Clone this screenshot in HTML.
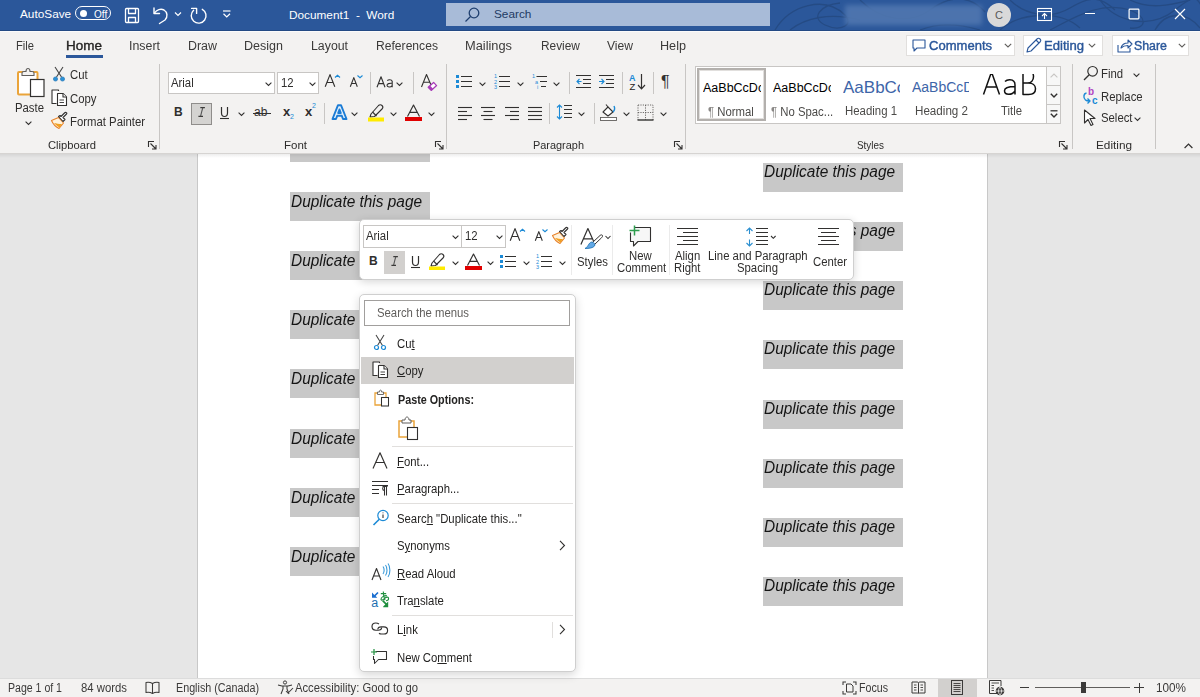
<!DOCTYPE html>
<html><head><meta charset="utf-8"><title>Word</title>
<style>
html,body{margin:0;padding:0;}
body{width:1200px;height:697px;overflow:hidden;position:relative;background:#e6e6e6;font-family:"Liberation Sans", sans-serif;}
.t{position:absolute;white-space:nowrap;}
.r{position:absolute;}
.s{position:absolute;overflow:visible;}
</style></head><body>
<div class="r" style="left:0px;top:0px;width:1200px;height:31px;background:#2b579a;"></div>
<div class="r" style="left:0px;top:30px;width:1200px;height:1px;background:#234a84;"></div>
<div class="r" style="left:0px;top:31px;width:1200px;height:1px;background:#fbfbfb;"></div>
<div class="r" style="left:0px;top:32px;width:1200px;height:121px;background:#f3f2f1;"></div>
<div class="r" style="left:0px;top:153px;width:1200px;height:1px;background:#d6d4d2;"></div>
<div class="r" style="left:0px;top:154px;width:1200px;height:524px;background:#e6e6e6;"></div>
<div class="r" style="left:197px;top:154px;width:1px;height:524px;background:#c8c8c8;"></div>
<div class="r" style="left:198px;top:154px;width:789px;height:524px;background:#ffffff;"></div>
<div class="r" style="left:987px;top:154px;width:1px;height:524px;background:#c8c8c8;"></div>
<div class="r" style="left:0px;top:679px;width:1200px;height:18px;background:#f3f2f1;"></div>
<div class="r" style="left:0px;top:678px;width:1200px;height:1px;background:#dcdcdc;"></div>
<div class="r" style="left:290px;top:133px;width:140px;height:29px;background:#c8c8c8;"></div>
<div class="t" style="left:291px;top:133.10px;font-size:16px;line-height:20.8px;color:#151515;font-weight:normal;font-style:italic;transform:scaleX(0.963);transform-origin:0 0;">Duplicate this page</div>
<div class="r" style="left:290px;top:192px;width:140px;height:29px;background:#c8c8c8;"></div>
<div class="t" style="left:291px;top:192.10px;font-size:16px;line-height:20.8px;color:#151515;font-weight:normal;font-style:italic;transform:scaleX(0.963);transform-origin:0 0;">Duplicate this page</div>
<div class="r" style="left:290px;top:251px;width:140px;height:29px;background:#c8c8c8;"></div>
<div class="t" style="left:291px;top:251.10px;font-size:16px;line-height:20.8px;color:#151515;font-weight:normal;font-style:italic;transform:scaleX(0.963);transform-origin:0 0;">Duplicate this page</div>
<div class="r" style="left:290px;top:310px;width:140px;height:29px;background:#c8c8c8;"></div>
<div class="t" style="left:291px;top:310.10px;font-size:16px;line-height:20.8px;color:#151515;font-weight:normal;font-style:italic;transform:scaleX(0.963);transform-origin:0 0;">Duplicate this page</div>
<div class="r" style="left:290px;top:369px;width:140px;height:29px;background:#c8c8c8;"></div>
<div class="t" style="left:291px;top:369.10px;font-size:16px;line-height:20.8px;color:#151515;font-weight:normal;font-style:italic;transform:scaleX(0.963);transform-origin:0 0;">Duplicate this page</div>
<div class="r" style="left:290px;top:429px;width:140px;height:29px;background:#c8c8c8;"></div>
<div class="t" style="left:291px;top:429.10px;font-size:16px;line-height:20.8px;color:#151515;font-weight:normal;font-style:italic;transform:scaleX(0.963);transform-origin:0 0;">Duplicate this page</div>
<div class="r" style="left:290px;top:488px;width:140px;height:29px;background:#c8c8c8;"></div>
<div class="t" style="left:291px;top:488.10px;font-size:16px;line-height:20.8px;color:#151515;font-weight:normal;font-style:italic;transform:scaleX(0.963);transform-origin:0 0;">Duplicate this page</div>
<div class="r" style="left:290px;top:547px;width:140px;height:29px;background:#c8c8c8;"></div>
<div class="t" style="left:291px;top:547.10px;font-size:16px;line-height:20.8px;color:#151515;font-weight:normal;font-style:italic;transform:scaleX(0.963);transform-origin:0 0;">Duplicate this page</div>
<div class="r" style="left:763px;top:163px;width:140px;height:29px;background:#c8c8c8;"></div>
<div class="t" style="left:764px;top:162.10px;font-size:16px;line-height:20.8px;color:#151515;font-weight:normal;font-style:italic;transform:scaleX(0.963);transform-origin:0 0;">Duplicate this page</div>
<div class="r" style="left:763px;top:222px;width:140px;height:29px;background:#c8c8c8;"></div>
<div class="t" style="left:764px;top:221.10px;font-size:16px;line-height:20.8px;color:#151515;font-weight:normal;font-style:italic;transform:scaleX(0.963);transform-origin:0 0;">Duplicate this page</div>
<div class="r" style="left:763px;top:281px;width:140px;height:29px;background:#c8c8c8;"></div>
<div class="t" style="left:764px;top:280.10px;font-size:16px;line-height:20.8px;color:#151515;font-weight:normal;font-style:italic;transform:scaleX(0.963);transform-origin:0 0;">Duplicate this page</div>
<div class="r" style="left:763px;top:340px;width:140px;height:29px;background:#c8c8c8;"></div>
<div class="t" style="left:764px;top:339.10px;font-size:16px;line-height:20.8px;color:#151515;font-weight:normal;font-style:italic;transform:scaleX(0.963);transform-origin:0 0;">Duplicate this page</div>
<div class="r" style="left:763px;top:400px;width:140px;height:29px;background:#c8c8c8;"></div>
<div class="t" style="left:764px;top:399.10px;font-size:16px;line-height:20.8px;color:#151515;font-weight:normal;font-style:italic;transform:scaleX(0.963);transform-origin:0 0;">Duplicate this page</div>
<div class="r" style="left:763px;top:459px;width:140px;height:29px;background:#c8c8c8;"></div>
<div class="t" style="left:764px;top:458.10px;font-size:16px;line-height:20.8px;color:#151515;font-weight:normal;font-style:italic;transform:scaleX(0.963);transform-origin:0 0;">Duplicate this page</div>
<div class="r" style="left:763px;top:518px;width:140px;height:29px;background:#c8c8c8;"></div>
<div class="t" style="left:764px;top:517.10px;font-size:16px;line-height:20.8px;color:#151515;font-weight:normal;font-style:italic;transform:scaleX(0.963);transform-origin:0 0;">Duplicate this page</div>
<div class="r" style="left:763px;top:577px;width:140px;height:29px;background:#c8c8c8;"></div>
<div class="t" style="left:764px;top:576.10px;font-size:16px;line-height:20.8px;color:#151515;font-weight:normal;font-style:italic;transform:scaleX(0.963);transform-origin:0 0;">Duplicate this page</div>
<div class="r" style="left:0px;top:32px;width:1200px;height:121px;background:#f3f2f1;"></div>
<div class="r" style="left:0px;top:153px;width:1200px;height:1px;background:#d6d4d2;"></div>
<div class="r" style="left:0px;top:154px;width:1200px;height:4px;background:linear-gradient(rgba(0,0,0,0.07),rgba(0,0,0,0));"></div>
<svg class="s" style="left:770px;top:0px;overflow:hidden" width="430" height="30" viewBox="0 0 430 30" fill="none"><g stroke="#23477d" stroke-width="1.3" opacity="0.75"><path d="M5 30 C20 5 55 -5 75 15 C85 25 70 32 55 25 C40 18 50 5 70 3"/><path d="M20 30 C35 18 60 12 90 20"/><path d="M90 0 C110 20 140 25 160 10 S200 -5 215 12"/><path d="M230 30 C250 12 290 10 310 28"/><path d="M240 0 C255 15 280 20 300 8 S330 -4 345 10"/><path d="M280 30 C300 20 330 0 360 10 C380 18 375 30 360 28"/><path d="M330 0 C345 22 380 30 405 10 S425 -2 440 20"/><path d="M385 30 C395 12 415 10 430 28"/><path d="M360 0 C380 10 400 5 420 0"/><path d="M150 30 C170 22 190 24 210 30"/></g></svg>
<div class="t" style="left:20px;top:7.33px;font-size:11.8px;line-height:15.34px;color:#ffffff;font-weight:normal;font-style:normal;">AutoSave</div>
<div class="r" style="left:75px;top:6px;width:34px;height:12px;border:1.5px solid #fff;border-radius:8px;box-sizing:content-box"></div>
<div class="r" style="left:80px;top:10px;width:7px;height:7px;background:#fff;border-radius:50%"></div>
<div class="t" style="left:94px;top:7.50px;font-size:10px;line-height:13.0px;color:#ffffff;font-weight:normal;font-style:normal;">Off</div>
<svg class="s" style="left:124px;top:7px;" width="18" height="18" viewBox="0 0 18 18" fill="none"><g stroke="#fff" stroke-width="1.3" stroke-linejoin="round"><path d="M1.5 2.5 C1.5 1.9 1.9 1.5 2.5 1.5 H13.5 C14.1 1.5 14.5 1.9 14.5 2.5 V14.5 C14.5 15.1 14.1 15.5 13.5 15.5 H2.5 C1.9 15.5 1.5 15.1 1.5 14.5 Z"/><path d="M4.5 1.5 V6.5 H11.5 V1.5"/><path d="M4.5 15.5 V10.5 H11.5 V15.5"/></g></svg>
<svg class="s" style="left:152px;top:6px;" width="18" height="20" viewBox="0 0 18 20" fill="none"><g stroke="#fff" stroke-width="1.4" stroke-linecap="round" stroke-linejoin="round"><path d="M2 2 V7.5 H7.5"/><path d="M2.5 7 C4.5 3.5 9 2.5 12 4 C15.5 6 16 11 13 14 L7.5 17.5"/></g></svg>
<svg class="s" style="left:174px;top:11px;" width="8" height="6" viewBox="0 0 8 6" fill="none"><path d="M1 1.5 L4 4.5 L7 1.5" stroke="#fff" stroke-width="1.2"/></svg>
<svg class="s" style="left:189px;top:6px;" width="20" height="20" viewBox="0 0 20 20" fill="none"><g stroke="#fff" stroke-width="1.4" stroke-linecap="round" stroke-linejoin="round"><path d="M13.3 3.3 A7.4 7.4 0 1 1 4.6 4.3"/><path d="M2.6 2.4 H7.6 V7.4"/></g></svg>
<svg class="s" style="left:222px;top:10px;" width="10" height="9" viewBox="0 0 10 9" fill="none"><g stroke="#fff" stroke-width="1.2"><path d="M1 1 H8.5"/><path d="M1.5 3.8 L4.75 7 L8 3.8"/></g></svg>
<div class="t" style="left:289px;top:8.33px;font-size:11.8px;line-height:15.34px;color:#ffffff;font-weight:normal;font-style:normal;">Document1&nbsp; -&nbsp; Word</div>
<div class="r" style="left:446px;top:3px;width:324px;height:23px;background:#a8bbd8;"></div>
<svg class="s" style="left:464px;top:7px;" width="16" height="16" viewBox="0 0 16 16" fill="none"><g stroke="#1f3f6f" stroke-width="1.3"><circle cx="10" cy="6" r="4.8"/><path d="M6.5 9.5 L1.5 14.5"/></g></svg>
<div class="t" style="left:494px;top:7.33px;font-size:11.8px;line-height:15.34px;color:#1f3a64;font-weight:normal;font-style:normal;">Search</div>
<div class="r" style="left:845px;top:5px;width:137px;height:20px;background:#5077b0;filter:blur(2.5px);opacity:0.9"></div>
<div class="r" style="left:987px;top:3px;width:24px;height:24px;background:#d9d9d9;border-radius:50%"></div>
<div class="t" style="left:995px;top:7.85px;font-size:11px;line-height:14.3px;color:#5a5a5a;font-weight:normal;font-style:normal;">C</div>
<svg class="s" style="left:1037px;top:8px;" width="15" height="13" viewBox="0 0 15 13" fill="none"><g stroke="#fff" stroke-width="1.1"><rect x="0.5" y="0.5" width="14" height="12"/><path d="M0.5 3.5 H14.5"/><path d="M7.5 11 V6 M5 8 L7.5 5.5 L10 8"/></g></svg>
<div class="r" style="left:1085px;top:13px;width:10px;height:1.2px;background:#fff;"></div>
<svg class="s" style="left:1128px;top:8px;" width="12" height="12" viewBox="0 0 12 12" fill="none"><rect x="1.1" y="1.1" width="9.8" height="9.8" rx="0.8" stroke="#fff" stroke-width="1.2"/></svg>
<svg class="s" style="left:1174px;top:8px;" width="12" height="12" viewBox="0 0 12 12" fill="none"><path d="M1 1 L11 11 M11 1 L1 11" stroke="#fff" stroke-width="1.2"/></svg>
<div class="t" style="left:16.0px;top:38.70px;font-size:12px;line-height:15.6px;color:#3b3a39;font-weight:normal;font-style:normal;transform:scaleX(0.9326);transform-origin:0 0;">File</div>
<div class="t" style="left:66.0px;top:38.70px;font-size:12px;line-height:15.6px;color:#252423;font-weight:normal;font-style:normal;transform:scaleX(1.125);transform-origin:0 0;-webkit-text-stroke:0.35px #252423;">Home</div>
<div class="t" style="left:129.0px;top:38.70px;font-size:12px;line-height:15.6px;color:#3b3a39;font-weight:normal;font-style:normal;transform:scaleX(1.0333);transform-origin:0 0;">Insert</div>
<div class="t" style="left:188.0px;top:38.70px;font-size:12px;line-height:15.6px;color:#3b3a39;font-weight:normal;font-style:normal;transform:scaleX(1.0357);transform-origin:0 0;">Draw</div>
<div class="t" style="left:244.0px;top:38.70px;font-size:12px;line-height:15.6px;color:#3b3a39;font-weight:normal;font-style:normal;transform:scaleX(1.0428);transform-origin:0 0;">Design</div>
<div class="t" style="left:311.0px;top:38.70px;font-size:12px;line-height:15.6px;color:#3b3a39;font-weight:normal;font-style:normal;transform:scaleX(1.0278);transform-origin:0 0;">Layout</div>
<div class="t" style="left:376.0px;top:38.70px;font-size:12px;line-height:15.6px;color:#3b3a39;font-weight:normal;font-style:normal;transform:scaleX(1.0098);transform-origin:0 0;">References</div>
<div class="t" style="left:465.0px;top:38.70px;font-size:12px;line-height:15.6px;color:#3b3a39;font-weight:normal;font-style:normal;transform:scaleX(1.0682);transform-origin:0 0;">Mailings</div>
<div class="t" style="left:541.0px;top:38.70px;font-size:12px;line-height:15.6px;color:#3b3a39;font-weight:normal;font-style:normal;transform:scaleX(0.9898);transform-origin:0 0;">Review</div>
<div class="t" style="left:607.0px;top:38.70px;font-size:12px;line-height:15.6px;color:#3b3a39;font-weight:normal;font-style:normal;transform:scaleX(1.0078);transform-origin:0 0;">View</div>
<div class="t" style="left:660.0px;top:38.70px;font-size:12px;line-height:15.6px;color:#3b3a39;font-weight:normal;font-style:normal;transform:scaleX(1.0526);transform-origin:0 0;">Help</div>
<div class="r" style="left:66px;top:55px;width:37px;height:3px;background:#2b579a;"></div>
<div class="r" style="left:906px;top:35px;width:109px;height:21px;background:#fff;border:1px solid #e1dfdd;box-sizing:border-box"></div>
<div class="r" style="left:1023px;top:35px;width:80px;height:21px;background:#fff;border:1px solid #e1dfdd;box-sizing:border-box"></div>
<div class="r" style="left:1112px;top:35px;width:77px;height:21px;background:#fff;border:1px solid #e1dfdd;box-sizing:border-box"></div>
<svg class="s" style="left:912px;top:39px;" width="14" height="13" viewBox="0 0 14 13" fill="none"><path d="M1 1 H13 V9 H5 L2 12 V9 H1 Z" stroke="#2b579a" stroke-width="1.1" stroke-linejoin="round"/></svg>
<div class="t" style="left:929.0px;top:38.38px;font-size:12.5px;line-height:16.25px;color:#2b579a;font-weight:normal;font-style:normal;transform:scaleX(1.043);transform-origin:0 0;-webkit-text-stroke:0.4px #2b579a;">Comments</div>
<svg class="s" style="left:1004px;top:43px;" width="8" height="5" viewBox="0 0 8 5" fill="none"><path d="M0.8 0.8 L4 4 L7.2 0.8" stroke="#605e5c" stroke-width="1.1"/></svg>
<svg class="s" style="left:1025px;top:37px;" width="16" height="17" viewBox="0 0 16 17" fill="none"><g stroke="#2b579a" stroke-width="1.1" stroke-linejoin="round"><path d="M2 15 L3 11 L12 2 C13 1 14 1 15 2 C16 3 16 4 15 5 L6 14 Z"/><path d="M11 3 L14 6"/></g></svg>
<div class="t" style="left:1044.0px;top:38.38px;font-size:12.5px;line-height:16.25px;color:#2b579a;font-weight:normal;font-style:normal;transform:scaleX(1.0471);transform-origin:0 0;-webkit-text-stroke:0.4px #2b579a;">Editing</div>
<svg class="s" style="left:1088px;top:43px;" width="8" height="5" viewBox="0 0 8 5" fill="none"><path d="M0.8 0.8 L4 4 L7.2 0.8" stroke="#605e5c" stroke-width="1.1"/></svg>
<svg class="s" style="left:1117px;top:38px;" width="16" height="15" viewBox="0 0 16 15" fill="none"><g stroke="#2b579a" stroke-width="1.1" stroke-linejoin="round"><path d="M1 7 V14 H13 V10"/><path d="M4 10 C5 6 8 5 11 5 V2 L15 6 L11 10 V7.5 C8 7.5 6 8 4 10 Z"/></g></svg>
<div class="t" style="left:1134.0px;top:38.38px;font-size:12.5px;line-height:16.25px;color:#2b579a;font-weight:normal;font-style:normal;transform:scaleX(0.988);transform-origin:0 0;-webkit-text-stroke:0.4px #2b579a;">Share</div>
<svg class="s" style="left:1178px;top:43px;" width="8" height="5" viewBox="0 0 8 5" fill="none"><path d="M0.8 0.8 L4 4 L7.2 0.8" stroke="#605e5c" stroke-width="1.1"/></svg>
<div class="t" style="left:48.0px;top:138.35px;font-size:11px;line-height:14.3px;color:#2d2c2b;font-weight:normal;font-style:normal;transform:scaleX(1.0191);transform-origin:0 0;">Clipboard</div>
<div class="t" style="left:284.0px;top:138.35px;font-size:11px;line-height:14.3px;color:#2d2c2b;font-weight:normal;font-style:normal;transform:scaleX(1.0455);transform-origin:0 0;">Font</div>
<div class="t" style="left:533.0px;top:138.35px;font-size:11px;line-height:14.3px;color:#2d2c2b;font-weight:normal;font-style:normal;transform:scaleX(0.9922);transform-origin:0 0;">Paragraph</div>
<div class="t" style="left:857.0px;top:138.35px;font-size:11px;line-height:14.3px;color:#2d2c2b;font-weight:normal;font-style:normal;transform:scaleX(0.9);transform-origin:0 0;">Styles</div>
<div class="t" style="left:1096.0px;top:138.35px;font-size:11px;line-height:14.3px;color:#2d2c2b;font-weight:normal;font-style:normal;transform:scaleX(1.0714);transform-origin:0 0;">Editing</div>
<svg class="s" style="left:148px;top:141px;" width="9" height="9" viewBox="0 0 9 9" fill="none"><g stroke="#323130" stroke-width="1.1"><path d="M0.5 6 V0.5 H6"/><path d="M2.5 2.5 L8 8 M4 8 H8 V4"/></g></svg>
<svg class="s" style="left:435px;top:141px;" width="9" height="9" viewBox="0 0 9 9" fill="none"><g stroke="#323130" stroke-width="1.1"><path d="M0.5 6 V0.5 H6"/><path d="M2.5 2.5 L8 8 M4 8 H8 V4"/></g></svg>
<svg class="s" style="left:674px;top:141px;" width="9" height="9" viewBox="0 0 9 9" fill="none"><g stroke="#323130" stroke-width="1.1"><path d="M0.5 6 V0.5 H6"/><path d="M2.5 2.5 L8 8 M4 8 H8 V4"/></g></svg>
<svg class="s" style="left:1059px;top:141px;" width="9" height="9" viewBox="0 0 9 9" fill="none"><g stroke="#323130" stroke-width="1.1"><path d="M0.5 6 V0.5 H6"/><path d="M2.5 2.5 L8 8 M4 8 H8 V4"/></g></svg>
<div class="r" style="left:159px;top:64px;width:1px;height:85px;background:#c8c6c4;"></div>
<div class="r" style="left:446px;top:64px;width:1px;height:85px;background:#c8c6c4;"></div>
<div class="r" style="left:685px;top:64px;width:1px;height:85px;background:#c8c6c4;"></div>
<div class="r" style="left:1072px;top:64px;width:1px;height:85px;background:#c8c6c4;"></div>
<div class="r" style="left:1155px;top:64px;width:1px;height:85px;background:#c8c6c4;"></div>
<svg class="s" style="left:1184px;top:143px;" width="9" height="6" viewBox="0 0 9 6" fill="none"><path d="M0.6 5 L4.5 1 L8.4 5" stroke="#323130" stroke-width="1.2"/></svg>
<svg class="s" style="left:16px;top:66px;" width="30" height="32" viewBox="0 0 30 32" fill="none"><rect x="2" y="6" width="19.5" height="22.5" rx="1" fill="#fff" stroke="#eaa43a" stroke-width="2"/><path d="M6 9.5 V7 C6 6 7 5.5 8 5.5 H10 C10 3.5 11 2.5 12 2.5 C13 2.5 14 3.5 14 5.5 H16 C17 5.5 18 6 18 7 V9.5 Z" fill="#f3f2f1" stroke="#605e5c" stroke-width="1.1"/><rect x="14.5" y="13.5" width="13.5" height="17" fill="#fff" stroke="#323130" stroke-width="1.2"/></svg>
<div class="t" style="left:15px;top:100.70px;font-size:12px;line-height:15.6px;color:#2f2e2d;font-weight:normal;font-style:normal;transform:scaleX(0.945);transform-origin:0 0;">Paste</div>
<svg class="s" style="left:24.5px;top:120.5px;" width="7" height="4" viewBox="0 0 7 4" fill="none"><path d="M0.6 0.6 L3.5 3.4 L6.4 0.6" stroke="#323130" stroke-width="1.1"/></svg>
<svg class="s" style="left:52px;top:66px;" width="14" height="16" viewBox="0 0 14 16" fill="none"><g stroke="#444" stroke-width="1.1"><path d="M3 1 L9.5 11 M11 1 L4.5 11"/></g><circle cx="3.5" cy="13" r="2.1" fill="#2b91d6" stroke="#1b6fb0" stroke-width="0.6"/><circle cx="10.5" cy="13" r="2.1" fill="#2b91d6" stroke="#1b6fb0" stroke-width="0.6"/></svg>
<div class="t" style="left:70px;top:68.20px;font-size:12px;line-height:15.6px;color:#2f2e2d;font-weight:normal;font-style:normal;transform:scaleX(0.945);transform-origin:0 0;">Cut</div>
<svg class="s" style="left:50px;top:89px;" width="18" height="18" viewBox="0 0 18 18" fill="none"><g stroke="#323130" stroke-width="1.1" fill="#fff" stroke-linejoin="round"><path d="M8.5 2 V1 H2 V14.5 H6.5"/><path d="M7.5 4.5 H13 L16.5 8 V16.5 H7.5 Z"/><path d="M13 4.5 V8 H16.5"/><path d="M9.5 11 H14 M9.5 13.5 H14" stroke-width="0.9"/></g></svg>
<div class="t" style="left:70px;top:92.20px;font-size:12px;line-height:15.6px;color:#2f2e2d;font-weight:normal;font-style:normal;transform:scaleX(0.945);transform-origin:0 0;">Copy</div>
<svg class="s" style="left:50px;top:112px;" width="18" height="18" viewBox="0 0 18 18" fill="none"><path d="M1.5 8.5 L8.5 5.5 L13.5 11 L9 16.5 C6 15 3 12 1.5 8.5 Z" fill="#fff3dd" stroke="#e8822a" stroke-width="1.1" stroke-linejoin="round"/><path d="M4 11 C6 13 8 14.5 9.5 15.5 L12 12 C9 12 6 11.5 4 11 Z" fill="#f0a020"/><path d="M8.5 4.5 L13 9.5 L15 7.5 L13 5.5 L16.5 2 C17 1.5 17 1 16.5 0.8 L16 0.5 C15.5 0.2 15 0.5 14.5 1 L11 4.5 L10 3.5 Z" fill="#fff" stroke="#323130" stroke-width="1.1" stroke-linejoin="round"/></svg>
<div class="t" style="left:70px;top:115.20px;font-size:12px;line-height:15.6px;color:#2f2e2d;font-weight:normal;font-style:normal;transform:scaleX(0.945);transform-origin:0 0;">Format Painter</div>
<div class="r" style="left:168px;top:72px;width:107px;height:22px;background:#fff;border:1px solid #c8c6c4;box-sizing:border-box"></div>
<div class="r" style="left:277px;top:72px;width:42px;height:22px;background:#fff;border:1px solid #c8c6c4;box-sizing:border-box"></div>
<div class="t" style="left:171px;top:76.20px;font-size:12px;line-height:15.6px;color:#2f2e2d;font-weight:normal;font-style:normal;transform:scaleX(0.945);transform-origin:0 0;">Arial</div>
<svg class="s" style="left:265.0px;top:81.5px;" width="7" height="4" viewBox="0 0 7 4" fill="none"><path d="M0.6 0.6 L3.5 3.4 L6.4 0.6" stroke="#323130" stroke-width="1.1"/></svg>
<div class="t" style="left:281px;top:76.20px;font-size:12px;line-height:15.6px;color:#2f2e2d;font-weight:normal;font-style:normal;transform:scaleX(0.945);transform-origin:0 0;">12</div>
<svg class="s" style="left:309.0px;top:81.5px;" width="7" height="4" viewBox="0 0 7 4" fill="none"><path d="M0.6 0.6 L3.5 3.4 L6.4 0.6" stroke="#323130" stroke-width="1.1"/></svg>
<svg class="s" style="left:322px;top:72px;" width="44" height="18" viewBox="0 0 44 18" fill="none"><path d="M3.2 14.8 L8 2.6 L12.8 14.8 M4.9 10.5 H11.1" stroke="#323130" stroke-width="1.15" stroke-linejoin="round"/><path d="M13 5.5 L15.5 3.3 L18 5.5" stroke="#1b8ad6" stroke-width="1.2"/><path d="M28.3 14.8 L31.8 5.6 L35.3 14.8 M29.6 11.5 H34" stroke="#323130" stroke-width="1.1" stroke-linejoin="round"/><path d="M35.5 3.5 L38 5.6 L40.5 3.5" stroke="#1b8ad6" stroke-width="1.2"/></svg>
<div class="r" style="left:370px;top:72px;width:1px;height:22px;background:#c8c6c4;"></div>
<svg class="s" style="left:376px;top:76px;" width="18" height="12" viewBox="0 0 18 12" fill="none"><path d="M1 11.2 L5 0.8 L9 11.2 M2.4 7.6 H7.6" stroke="#323130" stroke-width="1.1" stroke-linejoin="round"/><path d="M11.3 4.6 C12.2 3.6 15.5 3.3 16.2 5.2 V11.2 M16.2 7.3 C13.3 7.1 11 7.7 11 9.3 C11 11.4 14.6 11.6 16.2 9.6" stroke="#323130" stroke-width="1.1"/></svg>
<svg class="s" style="left:395.5px;top:81.5px;" width="7" height="4" viewBox="0 0 7 4" fill="none"><path d="M0.6 0.6 L3.5 3.4 L6.4 0.6" stroke="#323130" stroke-width="1.1"/></svg>
<div class="r" style="left:413px;top:72px;width:1px;height:22px;background:#c8c6c4;"></div>
<svg class="s" style="left:420px;top:73px;" width="18" height="18" viewBox="0 0 18 18" fill="none"><path d="M1.5 14 L6.5 1.5 L11 12 M3.4 9.3 H9.8" stroke="#323130" stroke-width="1.1" stroke-linejoin="round"/><path d="M8.2 14.2 L13.6 9.4 L16.6 12.6 L11.2 17.4 Z" fill="#fff" stroke="#a83bb8" stroke-width="1.3" stroke-linejoin="round"/><path d="M8.2 14.2 L10 12.6 L13 15.8 L11.2 17.4 Z" fill="#a83bb8"/></svg>
<div class="t" style="left:174px;top:104.70px;font-size:12px;line-height:15.6px;color:#2f2e2d;font-weight:bold;font-style:normal;">B</div>
<div class="r" style="left:191px;top:103px;width:21px;height:22px;background:#d4d3d1;border:1px solid #8f8d8b;box-sizing:border-box"></div>
<svg class="s" style="left:191px;top:103px;" width="21" height="21" viewBox="0 0 21 21" fill="none"><path d="M9.3 4.6 H13.9 M7.4 13.4 H12" stroke="#3b3a39" stroke-width="1.3"/><path d="M11.7 4.8 L9.6 13.2" stroke="#555" stroke-width="1.1"/></svg>
<svg class="s" style="left:219px;top:106px;" width="11" height="14" viewBox="0 0 11 14" fill="none"><path d="M2.5 1 V7 C2.5 9.5 4 10.5 5.5 10.5 C7 10.5 8.5 9.5 8.5 7 V1" stroke="#2f2e2d" stroke-width="1.2"/><path d="M1 12.5 H10" stroke="#2f2e2d" stroke-width="1.1"/></svg>
<svg class="s" style="left:237.5px;top:111.5px;" width="7" height="4" viewBox="0 0 7 4" fill="none"><path d="M0.6 0.6 L3.5 3.4 L6.4 0.6" stroke="#323130" stroke-width="1.1"/></svg>
<div class="t" style="left:254px;top:105.20px;font-size:12px;line-height:15.6px;color:#323130;font-weight:normal;font-style:normal;">ab</div>
<div class="r" style="left:253px;top:113px;width:18px;height:1px;background:#323130;"></div>
<div class="t" style="left:283px;top:103.55px;font-size:13px;line-height:16.9px;color:#2f2e2d;font-weight:bold;font-style:normal;">x</div>
<div class="t" style="left:290px;top:112.45px;font-size:7px;line-height:9.1px;color:#1b8ad6;font-weight:normal;font-style:normal;">2</div>
<div class="t" style="left:305px;top:103.55px;font-size:13px;line-height:16.9px;color:#2f2e2d;font-weight:bold;font-style:normal;">x</div>
<div class="t" style="left:312px;top:101.45px;font-size:7px;line-height:9.1px;color:#1b8ad6;font-weight:normal;font-style:normal;">2</div>
<div class="r" style="left:324px;top:103px;width:1px;height:21px;background:#c8c6c4;"></div>
<svg class="s" style="left:331px;top:104px;" width="17" height="16" viewBox="0 0 17 16" fill="none"><path d="M1.5 15 L7 1.2 H10 L15.5 15 H12 L10.8 11.8 H6.2 L5 15 Z M7.2 9 H9.8 L8.5 5.5 Z" fill="#e3f0fb" stroke="#1c7cd5" stroke-width="1.9" stroke-linejoin="round"/></svg>
<svg class="s" style="left:350.5px;top:111.5px;" width="7" height="4" viewBox="0 0 7 4" fill="none"><path d="M0.6 0.6 L3.5 3.4 L6.4 0.6" stroke="#323130" stroke-width="1.1"/></svg>
<svg class="s" style="left:367px;top:102px;" width="18" height="20" viewBox="0 0 18 20" fill="none"><g stroke="#323130" stroke-width="1.1" fill="none" stroke-linejoin="round"><path d="M4 12 L11.5 3.5 C12.5 2.5 14 2.5 15 3.5 C16 4.5 16 6 15 7 L7.5 14.5 L3 15 Z"/><path d="M5.5 10 L9.5 14"/></g><rect x="1" y="15.5" width="16" height="4" fill="#ffeb00"/></svg>
<svg class="s" style="left:389.5px;top:111.5px;" width="7" height="4" viewBox="0 0 7 4" fill="none"><path d="M0.6 0.6 L3.5 3.4 L6.4 0.6" stroke="#323130" stroke-width="1.1"/></svg>
<svg class="s" style="left:405px;top:104px;" width="17" height="13" viewBox="0 0 17 13" fill="none"><path d="M2.5 12.5 L8.5 1 L14.5 12.5 M4.8 8.3 H12.2" stroke="#323130" stroke-width="1.15" stroke-linejoin="round"/></svg>
<div class="r" style="left:405px;top:117px;width:17px;height:4px;background:#e00000;"></div>
<svg class="s" style="left:427.5px;top:111.5px;" width="7" height="4" viewBox="0 0 7 4" fill="none"><path d="M0.6 0.6 L3.5 3.4 L6.4 0.6" stroke="#323130" stroke-width="1.1"/></svg>
<svg class="s" style="left:456px;top:74px;" width="16" height="15" viewBox="0 0 16 15" fill="none"><rect x="0" y="1" width="3" height="3" fill="#1b8ad6"/><rect x="0" y="6" width="3" height="3" fill="#1b8ad6"/><rect x="0" y="11" width="3" height="3" fill="#1b8ad6"/><path d="M5 2.5 H16 M5 7.5 H16 M5 12.5 H16" stroke="#323130" stroke-width="1.1"/></svg>
<svg class="s" style="left:478.5px;top:81.5px;" width="7" height="4" viewBox="0 0 7 4" fill="none"><path d="M0.6 0.6 L3.5 3.4 L6.4 0.6" stroke="#323130" stroke-width="1.1"/></svg>
<svg class="s" style="left:494px;top:73px;" width="16" height="16" viewBox="0 0 16 16" fill="none"><text x="0" y="5" font-size="5.5" fill="#1b8ad6" font-family="Liberation Sans">1</text><text x="0" y="10.5" font-size="5.5" fill="#1b8ad6" font-family="Liberation Sans">2</text><text x="0" y="16" font-size="5.5" fill="#1b8ad6" font-family="Liberation Sans">3</text><path d="M5 3.5 H16 M5 8.5 H16 M5 13.5 H16" stroke="#323130" stroke-width="1.1"/></svg>
<svg class="s" style="left:516.5px;top:81.5px;" width="7" height="4" viewBox="0 0 7 4" fill="none"><path d="M0.6 0.6 L3.5 3.4 L6.4 0.6" stroke="#323130" stroke-width="1.1"/></svg>
<svg class="s" style="left:532px;top:73px;" width="16" height="16" viewBox="0 0 16 16" fill="none"><text x="0" y="5" font-size="5.5" fill="#1b8ad6" font-family="Liberation Sans">1</text><text x="3" y="10.5" font-size="5.5" fill="#1b8ad6" font-family="Liberation Sans">a</text><text x="5" y="16" font-size="5.5" fill="#1b8ad6" font-family="Liberation Sans">i</text><path d="M4.5 3.5 H15 M8 8.5 H15 M9 13.5 H14" stroke="#323130" stroke-width="1.1"/></svg>
<svg class="s" style="left:552.5px;top:81.5px;" width="7" height="4" viewBox="0 0 7 4" fill="none"><path d="M0.6 0.6 L3.5 3.4 L6.4 0.6" stroke="#323130" stroke-width="1.1"/></svg>
<div class="r" style="left:569px;top:72px;width:1px;height:22px;background:#c8c6c4;"></div>
<svg class="s" style="left:576px;top:74px;" width="16" height="15" viewBox="0 0 16 15" fill="none"><path d="M0 1.5 H15 M7 5.5 H15 M7 9.5 H15 M0 13.5 H15" stroke="#323130" stroke-width="1"/><path d="M5.5 7.5 H1 M3.5 5 L1 7.5 L3.5 10" stroke="#1b8ad6" stroke-width="1.1"/></svg>
<svg class="s" style="left:599px;top:74px;" width="16" height="15" viewBox="0 0 16 15" fill="none"><path d="M0 1.5 H15 M7 5.5 H15 M7 9.5 H15 M0 13.5 H15" stroke="#323130" stroke-width="1"/><path d="M0 7.5 H5 M2.5 5 L5 7.5 L2.5 10" stroke="#1b8ad6" stroke-width="1.1"/></svg>
<div class="r" style="left:622px;top:72px;width:1px;height:22px;background:#c8c6c4;"></div>
<svg class="s" style="left:629px;top:73px;" width="18" height="17" viewBox="0 0 18 17" fill="none"><text x="0" y="7.5" font-size="9" fill="#1b8ad6" font-family="Liberation Sans" font-weight="bold">A</text><text x="0.5" y="16.5" font-size="9.5" fill="#252423" font-family="Liberation Sans">Z</text><path d="M12.5 1 V15.5 M9 12 L12.5 15.8 L16 12" stroke="#323130" stroke-width="1.2"/></svg>
<div class="r" style="left:653px;top:72px;width:1px;height:22px;background:#c8c6c4;"></div>
<div class="t" style="left:661px;top:71.60px;font-size:16px;line-height:20.8px;color:#323130;font-weight:normal;font-style:normal;">&#182;</div>
<svg class="s" style="left:458px;top:106px;" width="16" height="16" viewBox="0 0 16 16" fill="none"><path d="M0 1.5 H14" stroke="#323130" stroke-width="1.1"/><path d="M0 5.5 H9" stroke="#323130" stroke-width="1.1"/><path d="M0 9.5 H14" stroke="#323130" stroke-width="1.1"/><path d="M0 13.5 H9" stroke="#323130" stroke-width="1.1"/></svg>
<svg class="s" style="left:481px;top:106px;" width="16" height="16" viewBox="0 0 16 16" fill="none"><path d="M0 1.5 H14" stroke="#323130" stroke-width="1.1"/><path d="M2.5 5.5 H11.5" stroke="#323130" stroke-width="1.1"/><path d="M0 9.5 H14" stroke="#323130" stroke-width="1.1"/><path d="M2.5 13.5 H11.5" stroke="#323130" stroke-width="1.1"/></svg>
<svg class="s" style="left:505px;top:106px;" width="16" height="16" viewBox="0 0 16 16" fill="none"><path d="M0 1.5 H14" stroke="#323130" stroke-width="1.1"/><path d="M5 5.5 H14" stroke="#323130" stroke-width="1.1"/><path d="M0 9.5 H14" stroke="#323130" stroke-width="1.1"/><path d="M5 13.5 H14" stroke="#323130" stroke-width="1.1"/></svg>
<svg class="s" style="left:528px;top:106px;" width="16" height="16" viewBox="0 0 16 16" fill="none"><path d="M0 1.5 H14" stroke="#323130" stroke-width="1.1"/><path d="M0 5.5 H14" stroke="#323130" stroke-width="1.1"/><path d="M0 9.5 H14" stroke="#323130" stroke-width="1.1"/><path d="M0 13.5 H14" stroke="#323130" stroke-width="1.1"/></svg>
<div class="r" style="left:549px;top:103px;width:1px;height:21px;background:#c8c6c4;"></div>
<svg class="s" style="left:556px;top:104px;" width="18" height="17" viewBox="0 0 18 17" fill="none"><path d="M3.5 1 V15 M1 3.5 L3.5 1 L6 3.5 M1 12.5 L3.5 15 L6 12.5" stroke="#1b8ad6" stroke-width="1.1"/><path d="M8 1.5 H16 M8 5.5 H16 M8 9.5 H16 M8 13.5 H16" stroke="#323130" stroke-width="1"/></svg>
<svg class="s" style="left:577.5px;top:111.5px;" width="7" height="4" viewBox="0 0 7 4" fill="none"><path d="M0.6 0.6 L3.5 3.4 L6.4 0.6" stroke="#323130" stroke-width="1.1"/></svg>
<div class="r" style="left:594px;top:103px;width:1px;height:21px;background:#c8c6c4;"></div>
<svg class="s" style="left:600px;top:103px;" width="18" height="19" viewBox="0 0 18 19" fill="none"><path d="M3 9 L8 4 L13 9 L8 13 Z" fill="#fff" stroke="#323130" stroke-width="1.1" stroke-linejoin="round"/><path d="M6 1.5 L8 4" stroke="#323130" stroke-width="1.1"/><path d="M13 9 C15 7 15 5 14 3" stroke="#1b8ad6" stroke-width="1.4"/><rect x="0.5" y="14.5" width="16" height="3" fill="#fff" stroke="#605e5c" stroke-width="0.9"/></svg>
<svg class="s" style="left:622.5px;top:111.5px;" width="7" height="4" viewBox="0 0 7 4" fill="none"><path d="M0.6 0.6 L3.5 3.4 L6.4 0.6" stroke="#323130" stroke-width="1.1"/></svg>
<svg class="s" style="left:637px;top:104px;" width="17" height="17" viewBox="0 0 17 17" fill="none"><path d="M1 1 H16 V16 M1 1 V16 M8.5 1 V16 M1 8.5 H16" stroke="#605e5c" stroke-width="0.9" stroke-dasharray="1.2 1.2"/><path d="M0.5 16 H16.5" stroke="#252423" stroke-width="1.3"/></svg>
<svg class="s" style="left:659.5px;top:111.5px;" width="7" height="4" viewBox="0 0 7 4" fill="none"><path d="M0.6 0.6 L3.5 3.4 L6.4 0.6" stroke="#323130" stroke-width="1.1"/></svg>
<div class="r" style="left:695px;top:66px;width:366px;height:58px;background:#fff;border:1px solid #c8c6c4;box-sizing:border-box"></div>
<div class="r" style="left:697px;top:68px;width:69px;height:53px;border:2px solid #b3b0ad;box-sizing:border-box;box-shadow:inset 0 0 0 1px #e1dfdd"></div>
<div class="t" style="left:703px;top:79.88px;font-size:12.5px;line-height:16.25px;color:#000;font-weight:normal;font-style:normal;width:58px;overflow:hidden;">AaBbCcDc</div>
<div class="t" style="left:708px;top:104.70px;font-size:12px;line-height:15.6px;color:#4b4a48;font-weight:normal;font-style:normal;transform:scaleX(0.945);transform-origin:0 0;"><span style="color:#8a8886">&#182;</span> Normal</div>
<div class="t" style="left:773px;top:79.88px;font-size:12.5px;line-height:16.25px;color:#000;font-weight:normal;font-style:normal;width:58px;overflow:hidden;">AaBbCcDc</div>
<div class="t" style="left:771px;top:104.70px;font-size:12px;line-height:15.6px;color:#4b4a48;font-weight:normal;font-style:normal;transform:scaleX(0.945);transform-origin:0 0;"><span style="color:#8a8886">&#182;</span> No Spac...</div>
<div class="t" style="left:843px;top:76.95px;font-size:17px;line-height:22.1px;color:#3d65a8;font-weight:normal;font-style:normal;width:57px;overflow:hidden;">AaBbCc</div>
<div class="t" style="left:845.0px;top:103.70px;font-size:12px;line-height:15.6px;color:#4b4a48;font-weight:normal;font-style:normal;transform:scaleX(0.9506);transform-origin:0 0;">Heading 1</div>
<div class="t" style="left:912px;top:78.40px;font-size:14px;line-height:18.2px;color:#3d65a8;font-weight:normal;font-style:normal;width:57px;overflow:hidden;">AaBbCcD</div>
<div class="t" style="left:915.0px;top:103.70px;font-size:12px;line-height:15.6px;color:#4b4a48;font-weight:normal;font-style:normal;transform:scaleX(0.9689);transform-origin:0 0;">Heading 2</div>
<svg class="s" style="left:982px;top:73.5px;overflow:hidden" width="56" height="22" viewBox="0 0 56 22" fill="none"><g stroke="#111" stroke-width="1.5" fill="none" stroke-linejoin="round"><path d="M1.5 20.5 L9.5 -2 L17.5 20.5 M4.5 13 H14.5"/><path d="M23 7.5 C25 5.5 30 5 32 7.5 C33 8.5 33 10 33 11 V20.5 M33 12.5 C28 12.5 22.5 13 22.5 16.8 C22.5 21.5 30 21.5 33 17"/><path d="M41 -4 V20.5 H46.5 C50.5 20.5 53.5 18.5 53.5 14.8 C53.5 11.2 50.5 9 46.5 9 H41 M45.5 9 C49.5 9 51.5 6 51.5 2.5 C51.5 -1 49 -3.5 45.5 -3.5 H41"/></g></svg>
<div class="t" style="left:1001.0px;top:103.70px;font-size:12px;line-height:15.6px;color:#4b4a48;font-weight:normal;font-style:normal;transform:scaleX(0.9459);transform-origin:0 0;">Title</div>
<div class="r" style="left:1046px;top:66px;width:1px;height:58px;background:#e1dfdd;"></div>
<div class="r" style="left:1047px;top:85px;width:14px;height:1px;background:#c8c6c4;"></div>
<div class="r" style="left:1047px;top:104px;width:14px;height:1px;background:#c8c6c4;"></div>
<div class="r" style="left:1046px;top:66px;width:15px;height:58px;border:1px solid #c8c6c4;box-sizing:border-box;background:#f7f7f7"></div>
<div class="r" style="left:1046px;top:104px;width:15px;height:1px;background:#c8c6c4;"></div>
<div class="r" style="left:1046px;top:85px;width:15px;height:1px;background:#c8c6c4;"></div>
<svg class="s" style="left:1050px;top:73px;" width="8" height="5" viewBox="0 0 8 5" fill="none"><path d="M0.6 4.4 L4 1 L7.4 4.4" stroke="#c8c6c4" stroke-width="1.1"/></svg>
<svg class="s" style="left:1050px;top:93px;" width="8" height="5" viewBox="0 0 8 5" fill="none"><path d="M0.8 0.8 L4 4 L7.2 0.8" stroke="#323130" stroke-width="1.4"/></svg>
<svg class="s" style="left:1050px;top:110px;" width="8" height="8" viewBox="0 0 8 8" fill="none"><path d="M0.5 0.8 H7.5" stroke="#323130" stroke-width="1.3"/><path d="M0.8 3.8 L4 7 L7.2 3.8" stroke="#323130" stroke-width="1.4"/></svg>
<svg class="s" style="left:1082px;top:65px;" width="18" height="18" viewBox="0 0 18 18" fill="none"><circle cx="10.6" cy="6.3" r="4.8" stroke="#323130" stroke-width="1.2"/><path d="M7.2 9.8 L2 15" stroke="#323130" stroke-width="1.3"/></svg>
<div class="t" style="left:1101px;top:67.20px;font-size:12px;line-height:15.6px;color:#2f2e2d;font-weight:normal;font-style:normal;transform:scaleX(0.945);transform-origin:0 0;">Find</div>
<svg class="s" style="left:1132.5px;top:72.5px;" width="7" height="4" viewBox="0 0 7 4" fill="none"><path d="M0.6 0.6 L3.5 3.4 L6.4 0.6" stroke="#323130" stroke-width="1.1"/></svg>
<svg class="s" style="left:1080px;top:86px;" width="20" height="20" viewBox="0 0 20 20" fill="none"><text x="8" y="9" font-size="10" fill="#b146c2" font-family="Liberation Sans" font-weight="bold">b</text><text x="12" y="17.5" font-size="10" fill="#1b8ad6" font-family="Liberation Sans" font-weight="bold">c</text><path d="M6.5 7 C3.5 7.5 3 12 5.5 14 C6.5 15 8 15 9.5 15 M7.5 12.5 L10 15 L7.5 17.5" stroke="#1b8ad6" stroke-width="1.4" stroke-linejoin="round"/></svg>
<div class="t" style="left:1101px;top:89.70px;font-size:12px;line-height:15.6px;color:#2f2e2d;font-weight:normal;font-style:normal;transform:scaleX(0.945);transform-origin:0 0;">Replace</div>
<svg class="s" style="left:1083px;top:109px;" width="15" height="18" viewBox="0 0 15 18" fill="none"><path d="M1.5 1 V14 L5 10.5 L8 16.5 L10 15.5 L7 9.5 H12 Z" fill="#fff" stroke="#323130" stroke-width="1.1" stroke-linejoin="round"/></svg>
<div class="t" style="left:1101px;top:111.20px;font-size:12px;line-height:15.6px;color:#2f2e2d;font-weight:normal;font-style:normal;transform:scaleX(0.945);transform-origin:0 0;">Select</div>
<svg class="s" style="left:1134.0px;top:116.5px;" width="7" height="4" viewBox="0 0 7 4" fill="none"><path d="M0.6 0.6 L3.5 3.4 L6.4 0.6" stroke="#323130" stroke-width="1.1"/></svg>
<div class="r" style="left:359px;top:219px;width:495px;height:61px;background:#fff;border:1px solid #cfcfcf;border-radius:5px;box-sizing:border-box;box-shadow:0 2px 8px rgba(0,0,0,0.16)"></div>
<div class="r" style="left:363px;top:225px;width:99px;height:23px;background:#fff;border:1px solid #c8c6c4;box-sizing:border-box"></div>
<div class="r" style="left:461px;top:225px;width:45px;height:23px;background:#fff;border:1px solid #c8c6c4;box-sizing:border-box"></div>
<div class="t" style="left:366px;top:228.70px;font-size:12px;line-height:15.6px;color:#2f2e2d;font-weight:normal;font-style:normal;transform:scaleX(0.945);transform-origin:0 0;">Arial</div>
<svg class="s" style="left:451.5px;top:234.5px;" width="7" height="4" viewBox="0 0 7 4" fill="none"><path d="M0.6 0.6 L3.5 3.4 L6.4 0.6" stroke="#323130" stroke-width="1.1"/></svg>
<div class="t" style="left:465px;top:228.70px;font-size:12px;line-height:15.6px;color:#2f2e2d;font-weight:normal;font-style:normal;transform:scaleX(0.945);transform-origin:0 0;">12</div>
<svg class="s" style="left:495.5px;top:234.5px;" width="7" height="4" viewBox="0 0 7 4" fill="none"><path d="M0.6 0.6 L3.5 3.4 L6.4 0.6" stroke="#323130" stroke-width="1.1"/></svg>
<svg class="s" style="left:507px;top:226px;" width="44" height="18" viewBox="0 0 44 18" fill="none"><path d="M3.2 14.8 L8 2.6 L12.8 14.8 M4.9 10.5 H11.1" stroke="#323130" stroke-width="1.15" stroke-linejoin="round"/><path d="M13 5.5 L15.5 3.3 L18 5.5" stroke="#1b8ad6" stroke-width="1.2"/><path d="M28.3 14.8 L31.8 5.6 L35.3 14.8 M29.6 11.5 H34" stroke="#323130" stroke-width="1.1" stroke-linejoin="round"/><path d="M35.5 3.5 L38 5.6 L40.5 3.5" stroke="#1b8ad6" stroke-width="1.2"/></svg>
<svg class="s" style="left:551px;top:227px;" width="18" height="18" viewBox="0 0 18 18" fill="none"><path d="M1.5 8.5 L8.5 5.5 L13.5 11 L9 16.5 C6 15 3 12 1.5 8.5 Z" fill="#fff3dd" stroke="#e8822a" stroke-width="1.1" stroke-linejoin="round"/><path d="M4 11 C6 13 8 14.5 9.5 15.5 L12 12 C9 12 6 11.5 4 11 Z" fill="#f0a020"/><path d="M8.5 4.5 L13 9.5 L15 7.5 L13 5.5 L16.5 2 C17 1.5 17 1 16.5 0.8 L16 0.5 C15.5 0.2 15 0.5 14.5 1 L11 4.5 L10 3.5 Z" fill="#fff" stroke="#323130" stroke-width="1.1" stroke-linejoin="round"/></svg>
<div class="t" style="left:369px;top:254.20px;font-size:12px;line-height:15.6px;color:#2f2e2d;font-weight:bold;font-style:normal;">B</div>
<div class="r" style="left:384px;top:251px;width:21px;height:23px;background:#d2d0ce;"></div>
<svg class="s" style="left:384px;top:252px;" width="21" height="21" viewBox="0 0 21 21" fill="none"><path d="M9.3 4.6 H13.9 M7.4 13.4 H12" stroke="#3b3a39" stroke-width="1.3"/><path d="M11.7 4.8 L9.6 13.2" stroke="#555" stroke-width="1.1"/></svg>
<svg class="s" style="left:410px;top:255px;" width="11" height="14" viewBox="0 0 11 14" fill="none"><path d="M2.5 1 V7 C2.5 9.5 4 10.5 5.5 10.5 C7 10.5 8.5 9.5 8.5 7 V1" stroke="#2f2e2d" stroke-width="1.2"/><path d="M1 12.5 H10" stroke="#2f2e2d" stroke-width="1.1"/></svg>
<svg class="s" style="left:428px;top:251px;" width="18" height="20" viewBox="0 0 18 20" fill="none"><g stroke="#323130" stroke-width="1.1" fill="none" stroke-linejoin="round"><path d="M4 12 L11.5 3.5 C12.5 2.5 14 2.5 15 3.5 C16 4.5 16 6 15 7 L7.5 14.5 L3 15 Z"/><path d="M5.5 10 L9.5 14"/></g><rect x="1" y="15.5" width="16" height="3.5" fill="#ffeb00"/></svg>
<svg class="s" style="left:451.5px;top:261px;" width="7" height="4" viewBox="0 0 7 4" fill="none"><path d="M0.6 0.6 L3.5 3.4 L6.4 0.6" stroke="#323130" stroke-width="1.1"/></svg>
<svg class="s" style="left:465px;top:253px;" width="17" height="13" viewBox="0 0 17 13" fill="none"><path d="M2.5 12.5 L8.5 1 L14.5 12.5 M4.8 8.3 H12.2" stroke="#323130" stroke-width="1.15" stroke-linejoin="round"/></svg>
<div class="r" style="left:465px;top:266px;width:17px;height:4px;background:#e00000;"></div>
<svg class="s" style="left:486.5px;top:261px;" width="7" height="4" viewBox="0 0 7 4" fill="none"><path d="M0.6 0.6 L3.5 3.4 L6.4 0.6" stroke="#323130" stroke-width="1.1"/></svg>
<svg class="s" style="left:500px;top:254px;" width="16" height="15" viewBox="0 0 16 15" fill="none"><rect x="0" y="1" width="3" height="3" fill="#1b8ad6"/><rect x="0" y="6" width="3" height="3" fill="#1b8ad6"/><rect x="0" y="11" width="3" height="3" fill="#1b8ad6"/><path d="M5 2.5 H16 M5 7.5 H16 M5 12.5 H16" stroke="#323130" stroke-width="1.1"/></svg>
<svg class="s" style="left:522.5px;top:261px;" width="7" height="4" viewBox="0 0 7 4" fill="none"><path d="M0.6 0.6 L3.5 3.4 L6.4 0.6" stroke="#323130" stroke-width="1.1"/></svg>
<svg class="s" style="left:536px;top:253px;" width="16" height="16" viewBox="0 0 16 16" fill="none"><text x="0" y="5" font-size="5.5" fill="#1b8ad6" font-family="Liberation Sans">1</text><text x="0" y="10.5" font-size="5.5" fill="#1b8ad6" font-family="Liberation Sans">2</text><text x="0" y="16" font-size="5.5" fill="#1b8ad6" font-family="Liberation Sans">3</text><path d="M5 3.5 H16 M5 8.5 H16 M5 13.5 H16" stroke="#323130" stroke-width="1.1"/></svg>
<svg class="s" style="left:558.5px;top:261px;" width="7" height="4" viewBox="0 0 7 4" fill="none"><path d="M0.6 0.6 L3.5 3.4 L6.4 0.6" stroke="#323130" stroke-width="1.1"/></svg>
<div class="r" style="left:571px;top:225px;width:1px;height:50px;background:#ebebeb;"></div>
<svg class="s" style="left:578px;top:226px;" width="34" height="26" viewBox="0 0 34 26" fill="none"><path d="M2.9 18.5 L9.9 2.5 L15.5 15 M5.4 12.8 H14" stroke="#323130" stroke-width="1.2" stroke-linejoin="round"/><path d="M14.5 16.5 L22 9.5 C23 8.6 24.3 8.8 24.5 9.5 C24.8 10.3 24.3 11 23.5 11.8 L16.5 18.5 Z" fill="#fff" stroke="#323130" stroke-width="1"/><path d="M14 16 C16.5 16.5 17.5 18.5 16.5 20 C15 22 11 22.5 7 22.5 C9 21.5 10 19.5 11 18 C12 16.5 13 16 14 16 Z" fill="#62a8e5" stroke="#1b6fb0" stroke-width="0.8"/><path d="M27.5 10 L30 12.5 L32.5 10" stroke="#323130" stroke-width="1.05"/></svg>
<div class="t" style="left:577px;top:254.70px;font-size:12px;line-height:15.6px;color:#2f2e2d;font-weight:normal;font-style:normal;transform:scaleX(0.945);transform-origin:0 0;">Styles</div>
<div class="r" style="left:612px;top:225px;width:1px;height:50px;background:#ebebeb;"></div>
<svg class="s" style="left:628px;top:225px;" width="24" height="23" viewBox="0 0 24 23" fill="none"><path d="M6.5 2.5 H22.5 V16.5 H10 L5.5 21 V16.5 H2.5 V7.5" fill="#f7f7f7" stroke="#323130" stroke-width="1.1" stroke-linejoin="round"/><path d="M6.5 0.5 V10.5 M1.5 5.5 H11.5" stroke="#2e9e4f" stroke-width="1.5"/></svg>
<div class="t" style="left:629px;top:249.20px;font-size:12px;line-height:15.6px;color:#2f2e2d;font-weight:normal;font-style:normal;transform:scaleX(0.945);transform-origin:0 0;">New</div>
<div class="t" style="left:617px;top:261.20px;font-size:12px;line-height:15.6px;color:#2f2e2d;font-weight:normal;font-style:normal;transform:scaleX(0.945);transform-origin:0 0;">Comment</div>
<div class="r" style="left:669px;top:225px;width:1px;height:50px;background:#ebebeb;"></div>
<svg class="s" style="left:676px;top:227px;" width="23" height="19" viewBox="0 0 23 19" fill="none"><path d="M1 1.5 H22 M7 5.5 H22 M1 9.5 H22 M7 13.5 H22 M1 17.5 H22" stroke="#323130" stroke-width="1.1"/></svg>
<div class="t" style="left:675px;top:249.20px;font-size:12px;line-height:15.6px;color:#2f2e2d;font-weight:normal;font-style:normal;transform:scaleX(0.945);transform-origin:0 0;">Align</div>
<div class="t" style="left:674px;top:261.20px;font-size:12px;line-height:15.6px;color:#2f2e2d;font-weight:normal;font-style:normal;transform:scaleX(0.945);transform-origin:0 0;">Right</div>
<svg class="s" style="left:745px;top:226px;" width="32" height="22" viewBox="0 0 32 22" fill="none"><path d="M4.5 2 V8 M1.5 5 L4.5 2 L7.5 5 M4.5 13.5 V20 M1.5 17 L4.5 20 L7.5 17" stroke="#2b8fd0" stroke-width="1.1"/><path d="M11 2.5 H23 M11 6.5 H23 M11 10.5 H23 M11 14.5 H23 M11 18.5 H23" stroke="#323130" stroke-width="1.1"/><path d="M26 10 L28.3 12.3 L30.6 10" stroke="#323130" stroke-width="1.1"/></svg>
<div class="t" style="left:708px;top:249.20px;font-size:12px;line-height:15.6px;color:#2f2e2d;font-weight:normal;font-style:normal;transform:scaleX(0.945);transform-origin:0 0;">Line and Paragraph</div>
<div class="t" style="left:737px;top:261.20px;font-size:12px;line-height:15.6px;color:#2f2e2d;font-weight:normal;font-style:normal;transform:scaleX(0.945);transform-origin:0 0;">Spacing</div>
<svg class="s" style="left:817px;top:227px;" width="24" height="19" viewBox="0 0 24 19" fill="none"><path d="M1 1.5 H22 M4 5.5 H19 M1 9.5 H22 M4 13.5 H19 M1 17.5 H22" stroke="#323130" stroke-width="1.1"/></svg>
<div class="t" style="left:813px;top:254.70px;font-size:12px;line-height:15.6px;color:#2f2e2d;font-weight:normal;font-style:normal;transform:scaleX(0.945);transform-origin:0 0;">Center</div>
<div class="r" style="left:359px;top:294px;width:217px;height:378px;background:#fff;border:1px solid #cfcfcf;border-radius:5px;box-sizing:border-box;box-shadow:0 3px 10px rgba(0,0,0,0.16)"></div>
<div class="r" style="left:364px;top:300px;width:206px;height:26px;background:#fff;border:1px solid #a19f9d;box-sizing:border-box"></div>
<div class="t" style="left:377px;top:306.20px;font-size:12px;line-height:15.6px;color:#605e5c;font-weight:normal;font-style:normal;transform:scaleX(0.945);transform-origin:0 0;">Search the menus</div>
<svg class="s" style="left:373px;top:334px;" width="14" height="17" viewBox="0 0 14 17" fill="none"><g stroke="#444" stroke-width="1.05"><path d="M3 1 L9.5 11.5 M11 1 L4.5 11.5"/></g><circle cx="3.5" cy="13.5" r="2" fill="#fff" stroke="#1b8ad6" stroke-width="1.2"/><circle cx="10.5" cy="13.5" r="2" fill="#fff" stroke="#1b8ad6" stroke-width="1.2"/></svg>
<div class="t" style="left:397px;top:336.70px;font-size:12px;line-height:15.6px;color:#252423;font-weight:normal;font-style:normal;transform:scaleX(0.945);transform-origin:0 0;">Cu<span style="text-decoration:underline;text-underline-offset:1px">t</span></div>
<div class="r" style="left:361px;top:357px;width:213px;height:27px;background:#d2d0ce;"></div>
<svg class="s" style="left:371px;top:361px;" width="18" height="18" viewBox="0 0 18 18" fill="none"><g stroke="#323130" stroke-width="1.1" fill="#fff" stroke-linejoin="round"><path d="M8.5 2 V1 H2 V14.5 H6.5"/><path d="M7.5 4.5 H13 L16.5 8 V16.5 H7.5 Z"/><path d="M13 4.5 V8 H16.5"/><path d="M9.5 11 H14 M9.5 13.5 H14" stroke-width="0.9"/></g></svg>
<div class="t" style="left:397px;top:364.20px;font-size:12px;line-height:15.6px;color:#252423;font-weight:normal;font-style:normal;transform:scaleX(0.945);transform-origin:0 0;"><span style="text-decoration:underline;text-underline-offset:1px">C</span>opy</div>
<svg class="s" style="left:373px;top:389px;" width="17" height="18" viewBox="0 0 17 18" fill="none"><path d="M2 4 H13 V16 H2 Z" fill="#fff" stroke="#eaa43a" stroke-width="1.3"/><path d="M4.5 5.5 V3 H6.5 C6.5 1.5 7 1 7.5 1 C8 1 8.5 1.5 8.5 3 H10.5 V5.5 Z" fill="#fff" stroke="#605e5c" stroke-width="0.9"/><rect x="8.5" y="8.5" width="7" height="8.5" fill="#fff" stroke="#323130" stroke-width="1.05"/></svg>
<div class="t" style="left:398.0px;top:392.70px;font-size:12px;line-height:15.6px;color:#252423;font-weight:bold;font-style:normal;transform:scaleX(0.8973);transform-origin:0 0;">Paste Options:</div>
<svg class="s" style="left:397px;top:416px;" width="23" height="24" viewBox="0 0 23 24" fill="none"><path d="M2 5 H17 V21 H2 Z" fill="#fff" stroke="#eaa43a" stroke-width="1.5"/><path d="M5 7 V4 H8 C8 2 9 1 10 1 C11 1 12 2 12 4 H14 V7 Z" fill="#fff" stroke="#605e5c" stroke-width="1"/><rect x="10.5" y="11.5" width="10" height="12" fill="#fff" stroke="#323130" stroke-width="1.1"/></svg>
<div class="r" style="left:392px;top:446px;width:181px;height:1px;background:#e1dfdd;"></div>
<svg class="s" style="left:372px;top:452px;" width="16" height="17" viewBox="0 0 16 17" fill="none"><path d="M1 16.5 L8 0.8 L15 16.5 M3.8 10.5 H12.2" stroke="#323130" stroke-width="1.15" stroke-linejoin="round"/></svg>
<div class="t" style="left:397px;top:454.70px;font-size:12px;line-height:15.6px;color:#252423;font-weight:normal;font-style:normal;transform:scaleX(0.945);transform-origin:0 0;"><span style="text-decoration:underline;text-underline-offset:1px">F</span>ont...</div>
<svg class="s" style="left:371px;top:480px;" width="19" height="16" viewBox="0 0 19 16" fill="none"><path d="M1 1.5 H17 M1 5.5 H17 M1 9.5 H8 M1 13.5 H8" stroke="#323130" stroke-width="1.05"/><path d="M11.5 6.5 H16.5 M13.5 6.5 V15.5 M15.5 6.5 V15.5 M13.5 6.5 C11 6.5 11 10.5 13.5 10.5" stroke="#323130" stroke-width="1.05"/></svg>
<div class="t" style="left:397px;top:482.20px;font-size:12px;line-height:15.6px;color:#252423;font-weight:normal;font-style:normal;transform:scaleX(0.945);transform-origin:0 0;"><span style="text-decoration:underline;text-underline-offset:1px">P</span>aragraph...</div>
<div class="r" style="left:392px;top:503px;width:181px;height:1px;background:#e1dfdd;"></div>
<svg class="s" style="left:372px;top:509px;" width="18" height="18" viewBox="0 0 18 18" fill="none"><circle cx="11" cy="6.5" r="5.2" stroke="#1b8ad6" stroke-width="1.2"/><path d="M7.3 10.2 L1.5 16" stroke="#1b8ad6" stroke-width="1.6"/><path d="M11 5.5 V9 M11 3.5 V4.2" stroke="#323130" stroke-width="1.1"/></svg>
<div class="t" style="left:397px;top:511.70px;font-size:12px;line-height:15.6px;color:#252423;font-weight:normal;font-style:normal;transform:scaleX(0.945);transform-origin:0 0;">Searc<span style="text-decoration:underline;text-underline-offset:1px">h</span> "Duplicate this..."</div>
<div class="t" style="left:397px;top:539.20px;font-size:12px;line-height:15.6px;color:#252423;font-weight:normal;font-style:normal;transform:scaleX(0.945);transform-origin:0 0;">S<span style="text-decoration:underline;text-underline-offset:1px">y</span>nonyms</div>
<svg class="s" style="left:559px;top:540px;" width="7" height="11" viewBox="0 0 7 11" fill="none"><path d="M1 0.8 L5.5 5.5 L1 10.2" stroke="#323130" stroke-width="1.1"/></svg>
<svg class="s" style="left:371px;top:563px;" width="19" height="18" viewBox="0 0 19 18" fill="none"><path d="M1 17 L5.5 5.5 L10 17 M2.6 13 H8.4" stroke="#323130" stroke-width="1.1" stroke-linejoin="round"/><path d="M12 3.5 C13.5 5.5 13.5 9 12 11 M14.5 2 C16.5 4.5 16.5 10 14.5 12.5 M17 0.5 C19.5 3.5 19.5 11 17 14" stroke="#3a9ad9" stroke-width="1.1"/></svg>
<div class="t" style="left:397px;top:566.70px;font-size:12px;line-height:15.6px;color:#252423;font-weight:normal;font-style:normal;transform:scaleX(0.945);transform-origin:0 0;"><span style="text-decoration:underline;text-underline-offset:1px">R</span>ead Aloud</div>
<svg class="s" style="left:371px;top:591px;" width="18" height="17" viewBox="0 0 18 17" fill="none"><path d="M1 1.5 V6.8 H6.3 L4.6 5.1 L7.6 2.1 L6.4 0.9 L3.4 3.9 Z" fill="#1b6fd0"/><text x="0.3" y="16.2" font-size="12.5" fill="#1b6fb0" font-family="Liberation Sans">a</text><path d="M9.8 2.6 H15.2 M12.3 0.6 C12.3 3.5 12.8 6.5 14 9.2 M15.8 4.6 C13 4.4 10 6.4 10 8.2 C10 9.8 12.3 9.2 14 7.2 C15.3 5.7 17.6 5.6 17.6 7.6 C17.6 9.2 16.2 9.8 15 9.8" stroke="#1e8f3e" stroke-width="1.1" fill="none"/><path d="M17.2 16.2 V10.6 L15.5 12.3 L12.3 9.1 L11.1 10.3 L14.3 13.5 L12.2 15.6 V16.2 Z" fill="#1e8f3e"/></svg>
<div class="t" style="left:397px;top:593.70px;font-size:12px;line-height:15.6px;color:#252423;font-weight:normal;font-style:normal;transform:scaleX(0.945);transform-origin:0 0;">Tra<span style="text-decoration:underline;text-underline-offset:1px">n</span>slate</div>
<div class="r" style="left:392px;top:615px;width:181px;height:1px;background:#e1dfdd;"></div>
<svg class="s" style="left:371px;top:622px;" width="18" height="13" viewBox="0 0 18 13" fill="none"><path d="M8 2 C7 1.3 6 1 4.8 1 C2.6 1 1 2.6 1 4.6 C1 6.6 2.6 8.2 4.8 8.2 H7.2 C9.2 8.2 10.6 7 10.6 5.6" stroke="#323130" stroke-width="1.15" fill="none"/><path d="M6.8 7.6 C6.8 6 8.2 4.8 10.2 4.8 H12.8 C15 4.8 16.6 6.4 16.6 8.4 C16.6 10.4 15 12 12.8 12 H10.4 C9.4 12 8.6 11.7 8 11.2" stroke="#323130" stroke-width="1.15" fill="none"/></svg>
<div class="t" style="left:397px;top:623.20px;font-size:12px;line-height:15.6px;color:#252423;font-weight:normal;font-style:normal;transform:scaleX(0.945);transform-origin:0 0;">L<span style="text-decoration:underline;text-underline-offset:1px">i</span>nk</div>
<div class="r" style="left:552px;top:622px;width:1px;height:16px;background:#e1dfdd;"></div>
<svg class="s" style="left:559px;top:624px;" width="7" height="11" viewBox="0 0 7 11" fill="none"><path d="M1 0.8 L5.5 5.5 L1 10.2" stroke="#323130" stroke-width="1.1"/></svg>
<svg class="s" style="left:371px;top:649px;" width="17" height="16" viewBox="0 0 17 16" fill="none"><path d="M4.5 2.5 H15.5 V10.5 H7.5 L3.5 14.5 V10.5 H2.5 V7" fill="none" stroke="#323130" stroke-width="1.05" stroke-linejoin="round"/><path d="M3 0 V6 M0 3 H6" stroke="#1e8f3e" stroke-width="1.2"/></svg>
<div class="t" style="left:397px;top:650.70px;font-size:12px;line-height:15.6px;color:#252423;font-weight:normal;font-style:normal;transform:scaleX(0.945);transform-origin:0 0;">New Co<span style="text-decoration:underline;text-underline-offset:1px">m</span>ment</div>
<div class="t" style="left:8.0px;top:681.20px;font-size:12px;line-height:15.6px;color:#3b3a39;font-weight:normal;font-style:normal;transform:scaleX(0.8795);transform-origin:0 0;">Page 1 of 1</div>
<div class="t" style="left:81.0px;top:681.20px;font-size:12px;line-height:15.6px;color:#3b3a39;font-weight:normal;font-style:normal;transform:scaleX(0.9446);transform-origin:0 0;">84 words</div>
<svg class="s" style="left:145px;top:681px;" width="15" height="14" viewBox="0 0 15 14" fill="none"><path d="M1 1.5 C3 1 5 1 7.5 2.5 C10 1 12 1 14 1.5 V11.5 C12 11 10 11 7.5 12.5 C5 11 3 11 1 11.5 Z M7.5 2.5 V12.5" stroke="#3b3a39" stroke-width="1.05" stroke-linejoin="round"/></svg>
<div class="t" style="left:176.0px;top:681.20px;font-size:12px;line-height:15.6px;color:#3b3a39;font-weight:normal;font-style:normal;transform:scaleX(0.8954);transform-origin:0 0;">English (Canada)</div>
<svg class="s" style="left:277px;top:680px;" width="17" height="15" viewBox="0 0 17 15" fill="none"><circle cx="8" cy="2.5" r="1.6" stroke="#3b3a39" stroke-width="1"/><path d="M1 5 L5 6 H11 L15 5 M6 6 V9 L4 14 M10 6 V9 L12 14" stroke="#3b3a39" stroke-width="1.05"/><path d="M9 11 L11 13 L16 8" stroke="#3b3a39" stroke-width="1.05"/></svg>
<div class="t" style="left:295.0px;top:681.20px;font-size:12px;line-height:15.6px;color:#3b3a39;font-weight:normal;font-style:normal;transform:scaleX(0.9361);transform-origin:0 0;">Accessibility: Good to go</div>
<svg class="s" style="left:842px;top:681px;" width="15" height="14" viewBox="0 0 15 14" fill="none"><path d="M1 4 V1 H4 M11 1 H14 V4 M14 10 V13 H11 M4 13 H1 V10" stroke="#3b3a39" stroke-width="1.05"/><path d="M4.5 3 H9 L11 5 V11 H4.5 Z" stroke="#3b3a39" stroke-width="1"/></svg>
<div class="t" style="left:859.0px;top:681.20px;font-size:12px;line-height:15.6px;color:#3b3a39;font-weight:normal;font-style:normal;transform:scaleX(0.8869);transform-origin:0 0;">Focus</div>
<svg class="s" style="left:911px;top:681px;" width="15" height="13" viewBox="0 0 15 13" fill="none"><path d="M1 1 H6 C7 1 7.5 1.5 7.5 2.5 C7.5 1.5 8 1 9 1 H14 V12 H9 C8 12 7.5 12.5 7.5 12.5 C7.5 12.5 7 12 6 12 H1 Z M7.5 2.5 V12" stroke="#3b3a39" stroke-width="1"/><path d="M3 4 H5.5 M3 6.5 H5.5 M3 9 H5.5 M9.5 4 H12 M9.5 6.5 H12 M9.5 9 H12" stroke="#3b3a39" stroke-width="0.9"/></svg>
<div class="r" style="left:938px;top:679px;width:39px;height:18px;background:#d2d0ce;"></div>
<svg class="s" style="left:951px;top:680px;" width="12" height="15" viewBox="0 0 12 15" fill="none"><rect x="0.5" y="0.5" width="11" height="14" stroke="#3b3a39" stroke-width="1"/><path d="M2.5 3.5 H9.5 M2.5 5.5 H9.5 M2.5 7.5 H9.5 M2.5 9.5 H9.5 M2.5 11.5 H9.5" stroke="#3b3a39" stroke-width="0.9"/></svg>
<svg class="s" style="left:989px;top:680px;" width="16" height="16" viewBox="0 0 16 16" fill="none"><path d="M8 13.5 H0.5 V0.5 H12 V6" stroke="#3b3a39" stroke-width="1"/><path d="M2.5 3 H10 M2.5 5.5 H5 M2.5 8 H5 M2.5 10.5 H5" stroke="#3b3a39" stroke-width="0.9"/><circle cx="11" cy="11" r="4.3" fill="#3b3a39"/><path d="M7 11 H15 M11 7 C9 9 9 13 11 15 C13 13 13 9 11 7" stroke="#f3f2f1" stroke-width="0.8"/></svg>
<div class="r" style="left:1020px;top:687px;width:9px;height:1px;background:#3b3a39;"></div>
<div class="r" style="left:1035px;top:687px;width:95px;height:1px;background:#605e5c;"></div>
<div class="r" style="left:1081px;top:682px;width:5px;height:11px;background:#3b3a39;"></div>
<div class="r" style="left:1134px;top:687px;width:10px;height:1px;background:#3b3a39;"></div>
<div class="r" style="left:1138.5px;top:682.5px;width:1px;height:10px;background:#3b3a39;"></div>
<div class="t" style="left:1156.0px;top:681.20px;font-size:12px;line-height:15.6px;color:#3b3a39;font-weight:normal;font-style:normal;transform:scaleX(0.9772);transform-origin:0 0;">100%</div>
</body></html>
